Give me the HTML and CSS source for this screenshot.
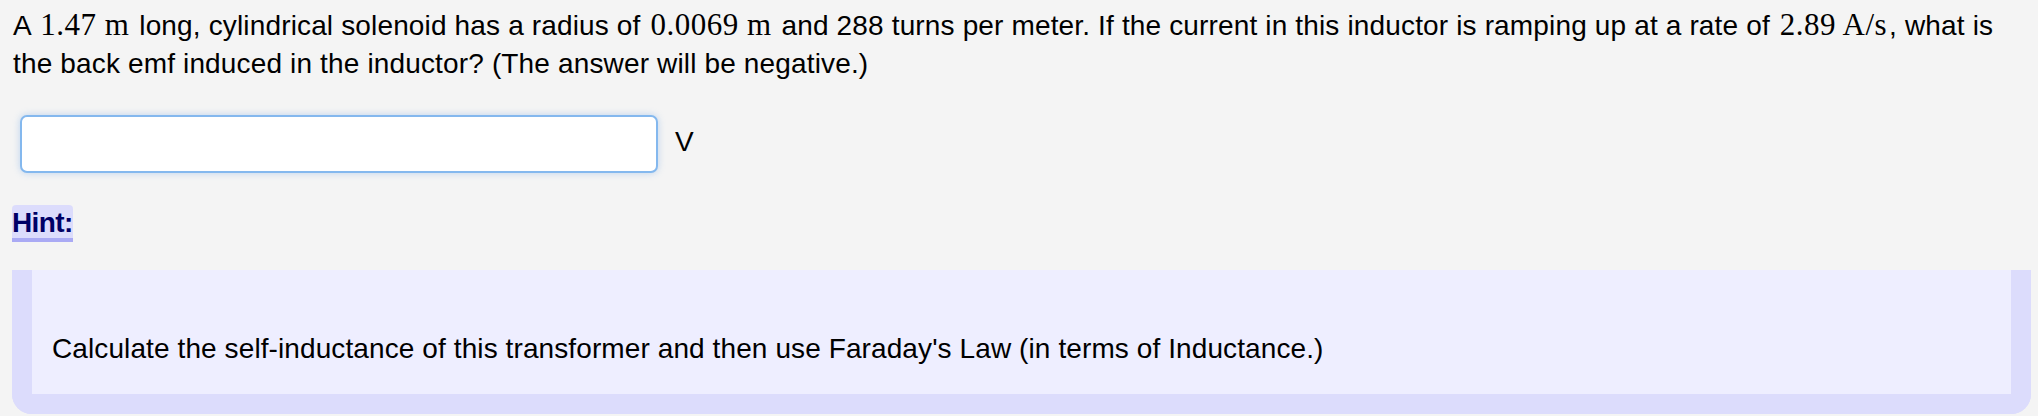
FILE: index.html
```html
<!DOCTYPE html>
<html lang="en">
<head>
<meta charset="utf-8">
<title>Solenoid back emf</title>
<link rel="stylesheet" href="styles.css">
</head>
<body>
<main class="page">
  <p class="question">A <span class="math">1.47 m</span> long, cylindrical solenoid has a radius of <span class="math">0.0069 m</span> and 288 turns per meter. If the current in this inductor is ramping up at a rate of <span class="math">2.89 A/s</span>, what is<br>the back emf induced in the inductor? (The answer will be negative.)</p>
  <div class="answer-row">
    <input class="answer-input" type="text" aria-label="Answer">
    <span class="unit">V</span>
  </div>
  <div class="hint-label">Hint:</div>
  <section class="hint-panel">
    <p class="hint-text">Calculate the self-inductance of this transformer and then use Faraday's Law (in terms of Inductance.)</p>
  </section>
</main>
</body>
</html>
```
FILE: styles.css
```css
html, body {
  margin: 0;
  padding: 0;
  background: #f4f4f4;
}

body {
  font-family: "Liberation Sans", Arial, Helvetica, sans-serif;
  font-size: 28px;
  color: #000;
}

.page {
  padding: 6px 7px 0 12px;
}

.question {
  margin: 0;
  padding-left: 1px;
  line-height: 38px;
  letter-spacing: 0.15px;
}

.math {
  font-family: "Liberation Serif", "Times New Roman", serif;
  font-size: 31px;
  letter-spacing: 0.5px;
  padding: 0 2px;
}

.answer-row {
  display: flex;
  align-items: center;
  margin-top: 32px;
  margin-left: 8px;
  height: 58px;
}

.answer-input {
  box-sizing: border-box;
  width: 638px;
  height: 58px;
  margin: 0;
  border: 2px solid #84b8ee;
  border-radius: 7px;
  background: #fff;
  box-shadow: 0 0 7px rgba(120, 170, 230, 0.45);
  outline: none;
  font-size: 28px;
  font-family: inherit;
}

.unit {
  margin-left: 17px;
  line-height: 1;
  padding-bottom: 4px;
}

.hint-label {
  display: inline-block;
  margin-top: 32px;
  height: 33px;
  line-height: 35px;
  font-weight: bold;
  color: #000066;
  background: #dcdcfc;
  border-bottom: 4px solid #aaaaf4;
  border-radius: 4px 4px 0 0;
  letter-spacing: -0.6px;
  vertical-align: top;
}

.hint-panel {
  margin-top: 28px;
  background: #eeeeff;
  border: 20px solid #dcdcfc;
  border-top: 0;
  border-radius: 0 0 20px 20px;
}

.hint-text {
  margin: 0;
  padding: 60px 20px 26px 20px;
  line-height: 38px;
  letter-spacing: 0.1px;
}
```
